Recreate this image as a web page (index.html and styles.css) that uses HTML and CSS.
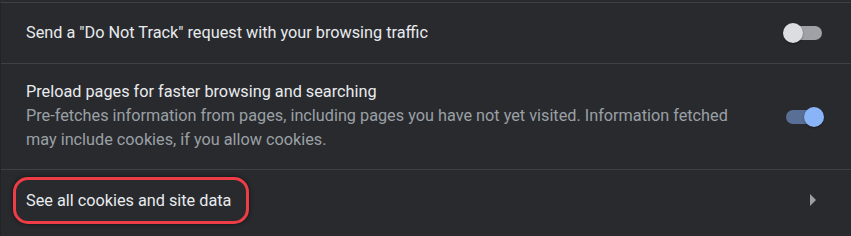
FILE: index.html
```html
<!DOCTYPE html>
<html>
<head>
<meta charset="utf-8">
<link rel="stylesheet" href="styles.css">
</head>
<body>
<div class="page">
  <div class="row row-single">
    <div class="label">Send a "Do Not Track" request with your browsing traffic</div>
    <div class="toggle"><span class="track"></span><span class="knob"></span></div>
  </div>
  <div class="row row-double">
    <div class="text">
      <div class="label">Preload pages for faster browsing and searching</div>
      <div class="desc">Pre-fetches information from pages, including pages you have not yet visited. Information fetched may include cookies, if you allow cookies.</div>
    </div>
    <div class="toggle on"><span class="track"></span><span class="knob"></span></div>
  </div>
  <div class="row row-link">
    <div class="label">See all cookies and site data</div>
    <svg class="arrow" width="8" height="14" viewBox="0 0 8 14"><path d="M1 1 L7 7 L1 13 Z" fill="#9aa0a6"/></svg>
    <div class="highlight"></div>
  </div>
</div>
</body>
</html>
```
FILE: styles.css
```css
html, body {
  margin: 0;
  padding: 0;
  background: #292a2d;
}
body {
  font-family: Roboto, "Noto Sans", sans-serif;
  color: #e8eaed;
  width: 851px;
  height: 236px;
  overflow: hidden;
}
.page {
  margin-top: 2px;
  border-top: 1px solid #3f4043;
  border-left: 1px solid #232326;
}
.row {
  position: relative;
  display: flex;
  align-items: center;
  justify-content: space-between;
  padding: 0 26px 0 25px;
  border-bottom: 1px solid #3f4043;
}
.row-single {
  height: 60px;
}
.row-double {
  height: 105px;
  align-items: flex-start;
}
.row-double .text {
  padding-top: 16px;
  width: 720px;
}
.row-double .toggle {
  margin-top: 43px;
}
.row-link {
  height: 66px;
  border-bottom: none;
  padding-right: 34px;
  align-items: flex-start;
}
.row-link .label {
  margin-top: 19px;
}
.row-link .arrow {
  margin-top: 23px;
}
.label {
  font-size: 16.25px;
  line-height: 24px;
  color: #e8eaed;
}
.desc {
  font-size: 16.25px;
  line-height: 24px;
  color: #9aa0a6;
}
.toggle {
  position: relative;
  width: 42px;
  height: 20px;
  flex: none;
}
.track {
  position: absolute;
  left: 4px;
  top: 3px;
  width: 35px;
  height: 14px;
  border-radius: 7px;
  background: #9ea1a6;
}
.knob {
  position: absolute;
  left: 0;
  top: 0;
  width: 20px;
  height: 20px;
  border-radius: 50%;
  background: #dcdde0;
  box-shadow: 0 1px 2px rgba(0,0,0,0.4);
}
.toggle.on .track {
  left: 3px;
  background: #5a6f95;
}
.toggle.on .knob {
  left: 21px;
  background: #8ab4f8;
}
.highlight {
  position: absolute;
  left: 12px;
  top: 7px;
  width: 230px;
  height: 41px;
  border: 3px solid #ee3d46;
  border-radius: 15px;
  box-shadow: 0 0 4px rgba(0,0,0,0.6);
}
```
